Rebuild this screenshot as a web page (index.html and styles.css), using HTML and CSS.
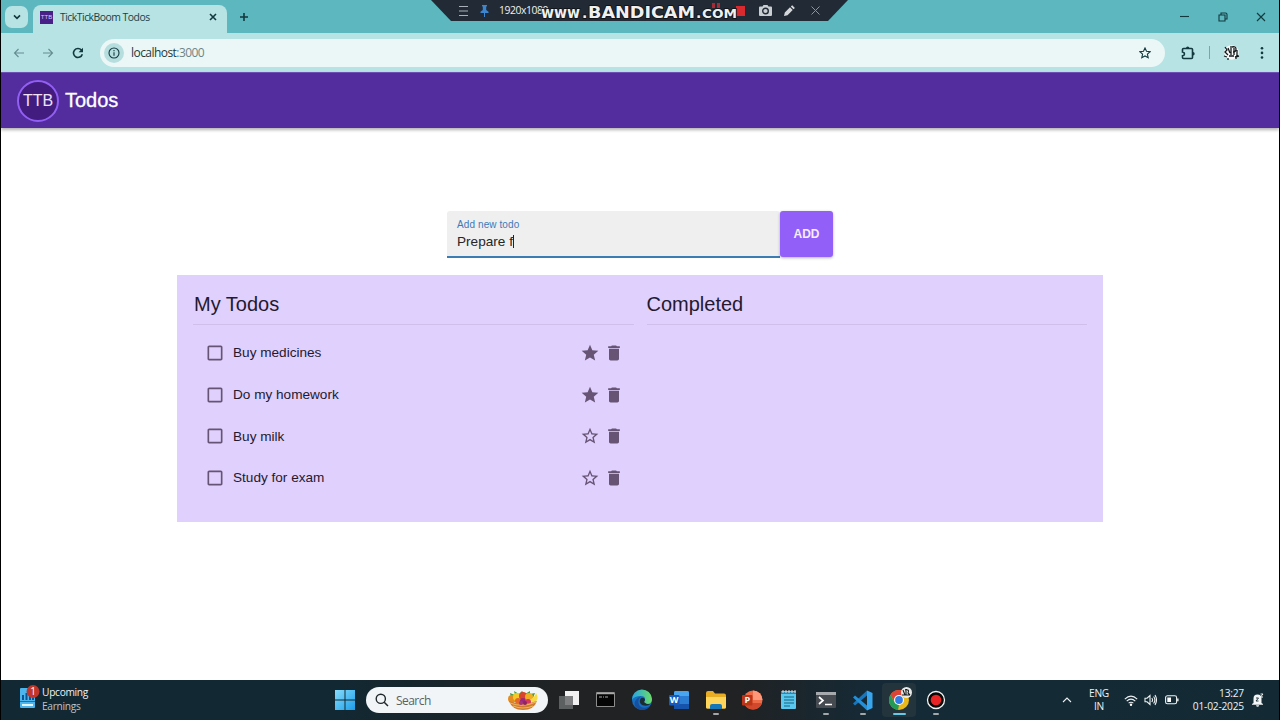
FILE: index.html
```html
<!DOCTYPE html>
<html lang="en">
<head>
    <meta charset="utf-8">
    <title>TickTickBoom Todos</title>
    <link rel="stylesheet" href="styles.css">
</head>
<body>
    <svg width="0" height="0" class="defs">
        <symbol id="star" viewBox="0 0 24 24"><path d="M12 17.27 18.18 21l-1.64-7.03L22 9.24l-7.19-.61L12 2 9.19 8.63 2 9.24l5.46 4.73L5.82 21z"/></symbol>
        <symbol id="star-outline" viewBox="0 0 24 24"><path d="m22 9.24-7.19-.62L12 2 9.19 8.63 2 9.24l5.46 4.73L5.82 21 12 17.27 18.18 21l-1.63-7.03L22 9.24zM12 15.4l-3.76 2.27 1-4.28-3.32-2.88 4.38-.38L12 6.1l1.71 4.04 4.38.38-3.32 2.88 1 4.28L12 15.4z"/></symbol>
        <symbol id="trash" viewBox="0 0 24 24"><path d="M6 19c0 1.100.9 2 2 2h8c1.100 0 2-.9 2-2V7H6v12zM19 4h-3.500l-1-1h-5l-1 1H5v2h14V4z"/></symbol>
        <symbol id="box" viewBox="0 0 24 24"><path d="M19 5v14H5V5h14m0-2H5c-1.100 0-2 .9-2 2v14c0 1.100.9 2 2 2h14c1.100 0 2-.9 2-2V5c0-1.100-.9-2-2-2z"/></symbol>
    </svg>

    <div class="tabstrip">
        <div class="tab-search">
            <svg width="10" height="10" viewBox="0 0 10 10"><path class="line thick" d="M2 3.400l3 3 3-3"/></svg>
        </div>
        <div class="tab">
            <span class="favicon">TTB</span>
            <span class="tab-title">TickTickBoom Todos</span>
            <svg width="8" height="8" viewBox="0 0 8 8"><path class="line thick" d="M1 1l6 6M7 1l-6 6"/></svg>
        </div>
        <svg class="new-tab" width="10" height="10" viewBox="0 0 10 10"><path class="line thick" d="M5 1v8M1 5h8"/></svg>
        <div class="window-buttons">
            <svg width="10" height="10" viewBox="0 0 10 10"><path class="line" d="M0 4.500h9"/></svg>
            <svg width="10" height="10" viewBox="0 0 10 10"><path class="line" d="M1 3h6v6h-6zM3 3V1h4.500q1.500 0 1.500 1.500V7H7"/></svg>
            <svg width="10" height="10" viewBox="0 0 10 10"><path class="line" d="M1 1l8 8M9 1l-8 8"/></svg>
        </div>
    </div>

    <div class="recorder">
        <svg width="10" height="12" viewBox="0 0 10 12"><path d="M0 1.500h9M0 6h9M0 10.500h9" stroke="#a9b0b8" stroke-width="1.100"/></svg>
        <svg class="pin" width="9" height="12" viewBox="0 0 9 12"><path d="M2 0h5v1l-.8.700V5l2.300 1.800V8H5v4H4V8H.5V6.800L2.800 5V1.700L2 1z" fill="#3c86d0"/></svg>
        <span class="resolution">1920x1080</span>
        <svg class="watermark" width="204" height="18" viewBox="0 0 204 18">
            <g class="mark">
                <text x="4" y="14" font-size="15" textLength="39" lengthAdjust="spacingAndGlyphs">www</text>
                <text x="45" y="14" font-size="14">.</text>
                <text x="51" y="14" font-size="15" textLength="107" lengthAdjust="spacingAndGlyphs">BANDICAM</text>
                <text x="159" y="14" font-size="14">.</text>
                <text x="165" y="14" font-size="11.500" textLength="35" lengthAdjust="spacingAndGlyphs">COM</text>
            </g>
        </svg>
        <svg class="pause" width="8" height="5" viewBox="0 0 8 5"><path d="M0 0h3v5H0zM5 0h3v5H5z" fill="#a52b38"/></svg>
        <span class="stop"></span>
        <svg class="camera" width="13" height="11" viewBox="0 0 13 11"><path d="M1 1.500h2.500L4.500 0h4l1 1.500H12q1 0 1 1V10q0 1-1 1H1q-1 0-1-1V2.500q0-1 1-1z" fill="#c9ced2"/><circle cx="6.500" cy="6" r="2.800" fill="none" stroke="#222b35" stroke-width="1.400"/></svg>
        <svg class="pencil" width="11" height="11" viewBox="0 0 11 11"><path d="M0 11l.8-3.500L6 2.300l2.700 2.700-5.200 5.200zM6.800 1.500L8.200.200 10.900 2.900 9.500 4.200z" fill="#d4d8db"/></svg>
        <svg class="rec-close" width="9" height="9" viewBox="0 0 9 9"><path d="M.5.5l8 8M8.500.5l-8 8" stroke="#8d949c"/></svg>
    </div>

    <div class="toolbar">
        <svg class="dim" width="12" height="10" viewBox="0 0 12 10"><path class="line" d="M11 5H1.500M5.500 1l-4 4 4 4"/></svg>
        <svg class="forward dim" width="12" height="10" viewBox="0 0 12 10"><path class="line" d="M1 5h9.500M6.500 1l4 4-4 4"/></svg>
        <svg class="reload" width="12" height="12" viewBox="0 0 12 12"><path class="line thick" d="M10.300 7.200A4.500 4.500 0 1 1 9.400 3L10.500 4.300"/><path d="M11 .8v4.400H6.600z" fill="#12393e"/></svg>
        <div class="address">
            <span class="site-info"><svg width="12" height="12" viewBox="0 0 12 12"><circle class="line" cx="6" cy="6" r="5"/><path class="line" d="M6 5.300v3.400M6 3.100v1.200"/></svg></span>
            <span class="url">localhost<span class="port">:3000</span></span>
            <svg class="bookmark" width="12" height="12" viewBox="0 0 12 12"><path class="line" d="M6 1l1.500 3.300 3.600.4-2.700 2.400.8 3.600L6 8.900l-3.200 1.800.8-3.600L.9 4.700l3.600-.4z"/></svg>
        </div>
        <svg class="puzzle" width="14" height="14" viewBox="0 0 14 14"><path class="line thick" d="M2.500 2.500h8q1 0 1 1v8q0 1-1 1h-8q-1 0-1-1V9.800q2-.3 2-1.900t-2-1.900V3.500q0-1 1-1z"/><path d="M5 2.200a1.700 1.700 0 0 1 3.400 0zM12 6a1.700 1.700 0 0 1 0 3.400z" fill="#12393e"/></svg>
        <span class="divider"></span>
        <svg class="profile" width="17" height="17" viewBox="0 0 17 17"><circle cx="8.500" cy="8.500" r="7.300" fill="#f7f9f8"/><path d="M2 3l2 3-2 2 3 3M5 4l2 5M8 2v9M9 3q4-1 4 2t-3 3M11 4v7M14 6v6M1 12l3 1M12 13l4-1M5 14v2M13 12v3M6 12h5" fill="none" stroke="#151b1c" stroke-width="1.300"/></svg>
        <svg class="menu" width="4" height="14" viewBox="0 0 4 14"><circle cx="2" cy="2.300" r="1.300"/><circle cx="2" cy="6.900" r="1.300"/><circle cx="2" cy="11.500" r="1.300"/></svg>
    </div>

    <div class="page">
        <header class="appbar">
            <div class="logo">TTB</div>
            <h1>Todos</h1>
        </header>
        <form class="add-form">
            <div class="field">
                <label>Add new todo</label>
                <div class="value">Prepare f<span class="caret"></span></div>
            </div>
            <button type="button">ADD</button>
        </form>
        <main class="board">
            <section class="column">
                <h2>My Todos</h2>
                <ul>
                    <li><svg class="check"><use href="#box"/></svg><span>Buy medicines</span><svg><use href="#star"/></svg><svg><use href="#trash"/></svg></li>
                    <li><svg class="check"><use href="#box"/></svg><span>Do my homework</span><svg><use href="#star"/></svg><svg><use href="#trash"/></svg></li>
                    <li><svg class="check"><use href="#box"/></svg><span>Buy milk</span><svg><use href="#star-outline"/></svg><svg><use href="#trash"/></svg></li>
                    <li><svg class="check"><use href="#box"/></svg><span>Study for exam</span><svg><use href="#star-outline"/></svg><svg><use href="#trash"/></svg></li>
                </ul>
            </section>
            <section class="column">
                <h2>Completed</h2>
            </section>
        </main>
    </div>

    <footer class="taskbar">
        <div class="widget">
            <svg width="22" height="24" viewBox="0 0 22 24"><rect x="2" y="4" width="15" height="20" rx="1" fill="#4db5ed"/><path d="M4 16v-5h2v5zM7.500 16V9h2v7zM11 16v-4h2v4zM14 16v-6h2v6z" fill="#0d5392"/><path d="M2 17h15v1H2z" fill="#1b6fae"/><path d="M4 20h11v2H4z" fill="#e5f5fc"/><circle cx="15" cy="7.500" r="6.500" fill="#c1352b"/><text class="badge" x="15" y="11">1</text></svg>
            <div class="widget-text"><div>Upcoming</div><div class="sub">Earnings</div></div>
        </div>
        <div class="apps">
            <svg class="start" width="20" height="20" viewBox="0 0 20 20"><defs><linearGradient id="win" x1="0" y1="0" x2="20" y2="20" gradientUnits="userSpaceOnUse"><stop offset="0" stop-color="#86dcfb"/><stop offset="1" stop-color="#1c9de9"/></linearGradient></defs><path d="M0 0h9.500v9.500H0zM10.500 0H20v9.500h-9.500zM0 10.500h9.500V20H0zM10.500 10.500H20V20h-9.500z" fill="url(#win)"/></svg>
            <div class="search">
                <svg width="14" height="14" viewBox="0 0 14 14"><circle cx="5.800" cy="5.800" r="4.600" fill="none" stroke="#20282c" stroke-width="1.400"/><path d="M9.200 9.200l3.800 3.800" stroke="#20282c" stroke-width="1.500"/></svg>
                <span>Search</span>
                <svg width="34" height="21" viewBox="0 0 34 21"><path d="M4 3l5 2-1-4 5 3 3-3 3 3 5-3 0 3 5-1-2 5H5z" fill="#4b9b38"/><circle cx="6" cy="9" r="4" fill="#e58b20"/><circle cx="11" cy="7" r="4" fill="#f3c928"/><circle cx="17" cy="6" r="4" fill="#d8452d"/><circle cx="23" cy="7" r="4" fill="#f1ae22"/><path d="M23 10q6-2 7-7 4 6-2 10z" fill="#f7db42"/><circle cx="12" cy="11" r="3" fill="#e4672a"/><circle cx="17" cy="11" r="3" fill="#9a287c"/><circle cx="22" cy="12" r="3" fill="#d8365e"/><path d="M3 11q13 5 28 0-3 9-14 9T3 11z" fill="#cf7a2e"/><path d="M4 13q13 5 26-1M7 16q10 4 20 0" fill="none" stroke="#efb35b" stroke-width="1.200"/><circle cx="15" cy="13" r="2" fill="#a5327e"/><circle cx="19" cy="13" r="2" fill="#8f2460"/></svg>
            </div>
            <div class="app first"><svg width="22" height="20" viewBox="0 0 22 20"><path d="M7 1h14v14H7z" fill="#f1f1f1"/><path d="M1 6h14v13H1z" fill="#696b6c" opacity=".85"/></svg></div>
            <div class="app"><svg width="20" height="16" viewBox="0 0 20 16"><path d="M.5.5h18v14H.5z" fill="#050505" stroke="#8d8d8d"/><path d="M1 1.500h17" stroke="#aaa" stroke-width="1.500"/><path d="M3 5h3M7 5h1M9 5h3" stroke="#aaa"/></svg></div>
            <div class="app"><svg width="22" height="22" viewBox="0 0 22 22"><defs><linearGradient id="edge" x1="0" x2="1"><stop offset="0" stop-color="#26a3e7"/><stop offset="1" stop-color="#6bdc65"/></linearGradient></defs><circle cx="11" cy="11" r="10" fill="#176fc4"/><path d="M1 11A10 10 0 0 1 21 10q0 5-5 5-3 0-3-2 1-1 1-3 0-3-4-3-7 0-9 4z" fill="url(#edge)"/><path d="M8 10q-2 5 2 8 4 2 9-1l-3 3q-8 3-12-3-2-6 6-10-1 1-2 3z" fill="#1551a0"/><path d="M13 13q1-1 1-3-2-2-4-1-3 4 1 7 5 2 9-1-4 1-7-2z" fill="#1a2d35"/></svg></div>
            <div class="app"><svg width="20" height="20" viewBox="0 0 20 20"><rect x="5" y="1" width="15" height="18" rx="1.500" fill="#2b7cd3"/><path d="M5 2.500Q5 1 6.500 1h12Q20 1 20 2.500V6H5z" fill="#49a5ed"/><path d="M5 14h15v3.500q0 1.500-1.500 1.500h-12Q5 19 5 17.500z" fill="#1553ac"/><rect y="5" width="10.500" height="10.500" rx="1" fill="#175abd"/><text class="letter" x="5.200" y="13.300">W</text></svg></div>
            <div class="app running"><svg width="22" height="20" viewBox="0 0 22 20"><path d="M1 3q0-2 2-2h5l2 2.500h9q2 0 2 2V17q0 1.500-1.500 1.500h-17Q1 18.500 1 17z" fill="#e9ad25"/><path d="M1 7h20v10q0 1.500-1.500 1.500h-17Q1 18.500 1 17z" fill="#ffd55b"/><path d="M5 19v-3q0-2 2-2h8q2 0 2 2v3z" fill="#1776b8"/></svg></div>
            <div class="app"><svg width="21" height="20" viewBox="0 0 21 20"><circle cx="11" cy="10" r="9.500" fill="#ed6c47"/><path d="M11 .5a9.500 9.500 0 0 1 9.500 9.500H11z" fill="#ff9778"/><path d="M2 13h18a9.500 9.500 0 0 1-18 0z" fill="#d1482c"/><rect y="5" width="10.500" height="10.500" rx="1" fill="#bd3519"/><text class="letter" x="5.300" y="13.300">P</text></svg></div>
            <div class="app"><svg width="18" height="20" viewBox="0 0 18 20"><rect x="1" y="1" width="15" height="18" rx="1" fill="#5bc8ef"/><path d="M1 2h15v2H1z" fill="#248ab9"/><path d="M4 7h10M4 10h10M4 13h10M4 16h6" stroke="#176382" stroke-width="1.200"/><path d="M3 0v3M6 0v3M9 0v3M12 0v3M15 0v3" stroke="#ddd"/></svg></div>
            <div class="app running"><svg width="20" height="16" viewBox="0 0 20 16"><rect width="20" height="16" rx="1" fill="#454b50"/><path d="M0 0h20v3H0z" fill="#a6aaae"/><path d="M3 5l4 3.500L3 12M9 12.500h7" fill="none" stroke="#fff" stroke-width="1.700"/></svg></div>
            <div class="app running"><svg width="21" height="21" viewBox="0 0 21 21"><path d="M15 .5l5.500 2.500v15L15 20.500z" fill="#38a5ed"/><path d="M15 .5v5L3 15.500l-2-2z" fill="#1876bd"/><path d="M15 20.500v-5L3 5.500l-2 2z" fill="#238fd8"/></svg></div>
            <div class="app active"><svg width="27" height="24" viewBox="0 0 27 24"><circle cx="11" cy="13" r="10" fill="#e9b91b"/><path d="M2.300 8A10 10 0 0 1 19.700 8H11l-4.300 7.500z" fill="#dc4437"/><path d="M2.300 8l4.400 7.500L11 18l-1 5A10 10 0 0 1 2.300 8z" fill="#229b58"/><circle cx="11" cy="13" r="5" fill="#fff"/><circle cx="11" cy="13" r="3.900" fill="#327ce8"/><circle cx="18.500" cy="5.500" r="5.500" fill="#e7eae9"/><path d="M15 3l2 5M18 2v6M17 3q5-1 3 3l2 2M14 8h8" fill="none" stroke="#151b1c" stroke-width="1.100"/></svg></div>
            <div class="app running"><svg width="20" height="20" viewBox="0 0 20 20"><circle cx="10" cy="10" r="8.500" fill="#070707" stroke="#f3f3f3" stroke-width="1.300"/><circle cx="10" cy="10" r="5.300" fill="#e92424"/></svg></div>
        </div>
        <div class="tray">
            <svg class="up" width="10" height="6" viewBox="0 0 10 6"><path class="light" d="M1 5l4-4 4 4"/></svg>
            <div class="lang">ENG<br>IN</div>
            <svg class="wifi" width="14" height="11" viewBox="0 0 14 11"><path class="light" d="M.8 4.200q6.200-6 12.400 0M2.700 6.200q4.300-4 8.600 0M4.600 8.200q2.400-2 4.800 0"/><circle cx="7" cy="9.700" r="1.200" fill="#fff"/></svg>
            <svg class="sound" width="13" height="12" viewBox="0 0 13 12"><path class="light" d="M1 4.200h2L6 1.500v9L3 7.800H1zM7.800 4q1.500 2 0 4M9.600 2.500q2.600 3.500 0 7M11 1q3 5 0 10"/></svg>
            <svg class="battery" width="14" height="10" viewBox="0 0 14 10"><rect class="light" x=".6" y=".8" width="11" height="8" rx="1.800"/><path d="M2.300 2.500H6v4.600H2.300zM12.200 3.500h1.300v2.700h-1.300z" fill="#fff"/></svg>
            <div class="clock">13:27<br>01-02-2025</div>
            <svg class="bell" width="12" height="14" viewBox="0 0 12 14"><path d="M1.500 10V5.500a4 4 0 0 1 8 0V10l1.500 1v.8H0V11zM4 12.300h3.200q-.3 1.500-1.600 1.500T4 12.300z" fill="#f3f5f6"/><path d="M4 5h2.500L4 8h2.500" fill="none" stroke="#142830" stroke-width=".9"/><path d="M8.500 1H11L8.500 4H11" fill="none" stroke="#fff" stroke-width=".9"/></svg>
        </div>
    </footer>
</body>
</html>
```
FILE: styles.css
```css
*{
    box-sizing: border-box;
}
body{
    margin:0;
    width:1280px;
    height:720px;
    overflow: hidden;
    display: flex;
    flex-direction: column;
    border-left: 1px solid #000;
    border-right: 1px solid #000;
    background-color: #b7e3e4;
    font-family: "Open Sans", "Noto Sans", sans-serif;
    position: relative;
}
svg{
    flex-shrink: 0;
}
.defs{
    position: absolute;
}
.line{
    fill:none;
    stroke:#12393e;
    stroke-width: 1.1;
}
.thick{
    stroke-width: 1.6;
}

/* browser */
.tabstrip{
    height:33px;
    background-color: #5cb7bf;
    display: flex;
    align-items: center;
}
.tab-search{
    width:23px;
    height:22px;
    margin-left:4px;
    border-radius: 7px;
    background-color: #b7e3e4;
    display: flex;
    align-items: center;
    justify-content: center;
}
.tab{
    width:194px;
    height:28px;
    margin:5px 0 0 5px;
    padding:0 10px 4px 7px;
    border-radius: 8px 8px 0 0;
    background-color: #b7e3e4;
    display: flex;
    align-items: center;
}
.favicon{
    width:13px;
    height:13px;
    background-color: #482087;
    color:#d9c2f7;
    font: 6px/13px "Liberation Sans", sans-serif;
    text-align: center;
}
.tab-title{
    flex:1;
    margin-left: 7px;
    font-size: 10.4px;
    letter-spacing: -0.5px;
    color:#1b4146;
    white-space: nowrap;
}
.new-tab{
    margin-left: 12px;
}
.window-buttons{
    margin-left: auto;
    padding-right: 13px;
    display: flex;
    gap:28px;
}
.recorder{
    position: absolute;
    top:0;
    left:430px;
    width:417px;
    height:21px;
    background-color: #222b35;
    clip-path: polygon(0 0, 100% 0, 397px 100%, 20px 100%);
    display: flex;
    align-items: center;
    padding-left: 28px;
}
.pin{
    margin-left: 11px;
}
.resolution{
    margin: -1px 0 0 10px;
    width:38px;
    font-size: 10.4px;
    letter-spacing: -0.45px;
    color:#eef1f3;
    white-space: nowrap;
}
.watermark{
    position: absolute;
    left:106px;
    top:4px;
    z-index: 1;
}
.mark{
    font-family: "DejaVu Sans", sans-serif;
    font-weight: bold;
    fill:#f0f0f0;
    stroke:#0d1013;
    stroke-width: 1.5px;
    paint-order: stroke;
}
.pause{
    margin: -10px 0 0 175px;
}
.stop{
    width:9px;
    height:10px;
    margin-left: 16px;
    background-color: #d92b2f;
}
.camera{
    margin-left: 14px;
}
.pencil{
    margin-left: 12px;
}
.rec-close{
    margin-left: 16px;
}
.toolbar{
    height:39px;
    display: flex;
    align-items: center;
    padding-left: 12px;
    background-color: #b7e3e4;
}
.dim{
    opacity: .5;
}
.forward{
    margin-left: 17px;
}
.reload{
    margin-left: 18px;
}
.address{
    width:1065px;
    height:28px;
    margin-left: 16px;
    border-radius: 14px;
    background-color: #ebf7f7;
    display: flex;
    align-items: center;
    padding:0 14px 0 4px;
}
.site-info{
    width:20px;
    height:20px;
    border-radius: 50%;
    background-color: #b7dedf;
    display: flex;
    align-items: center;
    justify-content: center;
}
.url{
    margin-left: 7px;
    font-size: 12px;
    letter-spacing: -0.55px;
    color:#213b3e;
}
.port{
    color:#6e8487;
}
.bookmark{
    margin-left: auto;
}
.puzzle{
    margin-left: 16px;
}
.divider{
    width:1px;
    height:13px;
    margin-left: 14px;
    background-color: #70a9ae;
}
.profile{
    margin-left: 13px;
}
.menu{
    margin-left: 20px;
    fill:#12393e;
}

/* todo page */
.page{
    height:608px;
    background-color: #fff;
    font-family: "Liberation Sans", Arial, sans-serif;
}
.appbar{
    height:56px;
    padding:0 16px;
    display: flex;
    align-items: center;
    background-color: #532c9d;
    border-top: 1px solid #6e4fb6;
    box-shadow: 0 2px 3px rgba(0,0,0,.3);
    color:#fff;
}
.logo{
    width:42px;
    height:42px;
    border:2px solid #925ff5;
    border-radius: 50%;
    background-color: #421d7f;
    color:#eee2fb;
    font-size: 16px;
    line-height: 38px;
    text-align: center;
    white-space: nowrap;
}
h1{
    margin:0 0 0 6px;
    font-size: 20px;
    font-weight: normal;
    -webkit-text-stroke: .3px #fff;
}
.add-form{
    display: flex;
    justify-content: center;
    padding-top: 83px;
}
.field{
    width:333px;
    height:47px;
    padding:8px 10px 0;
    background-color: #efefef;
    border-bottom: 2px solid #3b7cb5;
    border-radius: 3px 3px 0 0;
}
.field label{
    display: block;
    font-size: 10px;
    line-height: 12px;
    letter-spacing: .1px;
    color:#4179b8;
}
.value{
    display: flex;
    font-size: 13.6px;
    line-height: 22px;
    color:#262626;
}
.caret{
    width:1px;
    height:13px;
    margin-top: 4px;
    background-color: #222;
}
.add-form button{
    width:53px;
    height:46px;
    border:0;
    padding:0;
    border-radius: 3px;
    background-color: #925ff8;
    box-shadow: 0 1px 3px rgba(0,0,0,.3);
    color:#f5edff;
    font: bold 12px "Liberation Sans", Arial, sans-serif;
}
.board{
    width:926px;
    height:247px;
    margin:17px auto 0;
    padding:0 16px;
    display: flex;
    gap:13px;
    background-color: #dfd0fd;
    color:#24192f;
}
.column{
    flex:1;
}
h2{
    margin:0;
    height:50px;
    padding: 17px 0 0 1px;
    border-bottom: 1px solid #cfbfea;
    font-size: 20px;
    line-height: 24px;
    font-weight: normal;
}
.column + .column h2{
    padding-left: 0;
}
ul{
    margin:7px 0 0;
    padding:0 10px 0 12px;
    list-style: none;
}
li{
    height:41.7px;
    display: flex;
    align-items: center;
    font-size: 13.6px;
}
li span{
    flex:1;
    margin-left: 8px;
}
li svg{
    width:20px;
    height:20px;
    margin-left: 3.5px;
    fill:#675475;
}
li .check{
    margin-left: 0;
}

/* taskbar */
.taskbar{
    height:40px;
    background: linear-gradient(to right, #122832 0, #122832 340px, #202224 550px, #202224 740px, #152a36 870px, #132a35 100%);
    color:#eef2f4;
    display: flex;
}
.widget{
    width:333px;
    display: flex;
    padding:4px 0 0 17px;
}
.badge,.letter{
    font-size: 10px;
    fill:#fff;
    text-anchor: middle;
}
.letter{
    font-size: 9px;
    font-weight: bold;
}
.widget-text{
    margin: 2px 0 0 2px;
    font-size: 10.2px;
    line-height: 13.5px;
    letter-spacing: -0.3px;
}
.sub{
    color:#bcc5ca;
}
.apps{
    display: flex;
    align-items: center;
}
.start{
    margin-left: 1px;
}
.search{
    width:182px;
    height:26px;
    margin-left: 11px;
    padding:0 8px 0 9px;
    border-radius: 13px;
    background-color: #f1f5f7;
    display: flex;
    align-items: center;
}
.search span{
    flex:1;
    margin-left: 7px;
    font-size: 12px;
    letter-spacing: -0.55px;
    color:#5c6164;
}
.app{
    width:34px;
    height:38px;
    margin-right: 2.7px;
    display: flex;
    align-items: center;
    justify-content: center;
    position: relative;
}
.first{
    margin-left: 4px;
}
.running::after,.active::after{
    content:"";
    position: absolute;
    bottom:4px;
    width:6px;
    height:2px;
    border-radius: 1px;
    background-color: #a2a7aa;
}
.active{
    height:34px;
    border-radius: 4px;
    background-color: #23343d;
}
.active svg{
    margin: -3px 0 0 5px;
}
.active::after{
    bottom:2px;
    width:13px;
    background-color: #68c9e6;
}
.tray{
    flex:1;
    display: flex;
    align-items: center;
    justify-content: flex-end;
    padding-right: 15px;
    font-size: 10.2px;
    line-height: 13.5px;
    letter-spacing: -0.2px;
}
.light{
    fill:none;
    stroke:#eef2f4;
    stroke-width: 1.1;
}
.lang{
    width:22px;
    margin:0 14px 0 16px;
    text-align: center;
}
.sound{
    margin-left: 6px;
}
.battery{
    margin-left: 8px;
}
.clock{
    width:65px;
    text-align: right;
}
.bell{
    margin-left: 8px;
}
```
